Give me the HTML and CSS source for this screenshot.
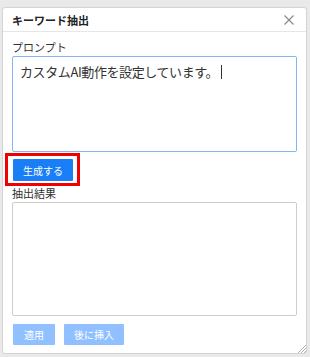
FILE: index.html
```html
<!DOCTYPE html>
<html lang="ja">
<head>
<meta charset="utf-8">
<link rel="stylesheet" href="styles.css">
</head>
<body>
<div class="dialog">
  <div class="header">
    <span class="title">キーワード抽出</span>
    <svg class="close" width="10" height="10" viewBox="0 0 10 10"><path d="M0.5 0.5L9.5 9.5M9.5 0.5L0.5 9.5" stroke="#8a8a8a" stroke-width="1.2" fill="none"/></svg>
  </div>
  <div class="body">
    <div class="label">プロンプト</div>
    <div class="field focused">カスタムAI動作を設定しています。<span class="caret"></span></div>
    <div class="gen-row">
      <span class="highlight"><button class="btn primary gen">生成する</button></span>
    </div>
    <div class="label result-label">抽出結果</div>
    <div class="field result"></div>
    <div class="actions">
      <button class="btn disabled apply">適用</button>
      <button class="btn disabled insert">後に挿入</button>
    </div>
  </div>
  <svg class="grip" width="9" height="9" viewBox="0 0 9 9"><path d="M9 1L1 9M9 4L4 9M9 7L7 9" stroke="#b5b5b5" stroke-width="1" fill="none"/></svg>
</div>
</body>
</html>
```
FILE: styles.css
```css
* { box-sizing: border-box; }
html, body { margin: 0; padding: 0; }
body {
  background: #e9e9e9;
  width: 310px;
  height: 357px;
  overflow: hidden;
  font-family: "Noto Sans CJK JP", "Noto Sans", sans-serif;
  color: #333;
}
.dialog {
  position: relative;
  margin: 7px 3px 0 2px;
  width: 305px;
  height: 347px;
  background: #fff;
  border: 1px solid #d4d4d4;
  border-radius: 3px;
  display: flex;
  flex-direction: column;
}
.header {
  height: 24px;
  border-bottom: 1px solid #e6e6e6;
  display: flex;
  align-items: center;
  justify-content: space-between;
  padding: 0 12px 0 9px;
}
.title {
  font-size: 11px;
  font-weight: bold;
  color: #222;
  line-height: 14px;
}
.close { display: block; margin-top: 1px; }
.body {
  padding: 8px 9px 0 9px;
  display: flex;
  flex-direction: column;
}
.label {
  font-size: 11px;
  line-height: 14px;
  color: #333;
  margin-bottom: 2px;
}
.field {
  width: 285px;
  border: 1px solid #cdcdcd;
  border-radius: 2px;
  background: #fff;
}
.field.focused {
  height: 96px;
  border-color: #86b3f5;
  padding: 6px 7px;
  font-size: 13px;
  line-height: 18px;
  letter-spacing: -0.4px;
  color: #333;
}
.caret {
  display: inline-block;
  width: 1px;
  height: 14px;
  background: #333;
  margin-left: 3px;
  vertical-align: -2px;
}
.gen-row {
  display: flex;
  margin-top: 7px;
  padding-left: 1px;
}
.highlight {
  position: relative;
  display: inline-flex;
}
.highlight::after {
  content: "";
  position: absolute;
  top: -6px;
  left: -8px;
  right: -7px;
  bottom: -5px;
  border: 3px solid #f00000;
}
.btn {
  font-family: "Noto Sans CJK JP", "Noto Sans", sans-serif;
  font-size: 10px;
  color: #fff;
  border: none;
  border-radius: 1px;
  padding: 0;
  margin: 0;
  display: flex;
  align-items: center;
  justify-content: center;
}
.primary { background: #1a7ff7; }
.gen { width: 60px; height: 22px; }
.result-label { margin-top: 5px; }
.field.result { height: 114px; }
.actions {
  display: flex;
  gap: 9px;
  margin-top: 8px;
  padding-left: 1px;
}
.disabled { background: #90c0ff; height: 21px; }
.apply { width: 42px; }
.insert { width: 60px; }
.grip {
  position: absolute;
  right: 0;
  bottom: 0;
}
```
